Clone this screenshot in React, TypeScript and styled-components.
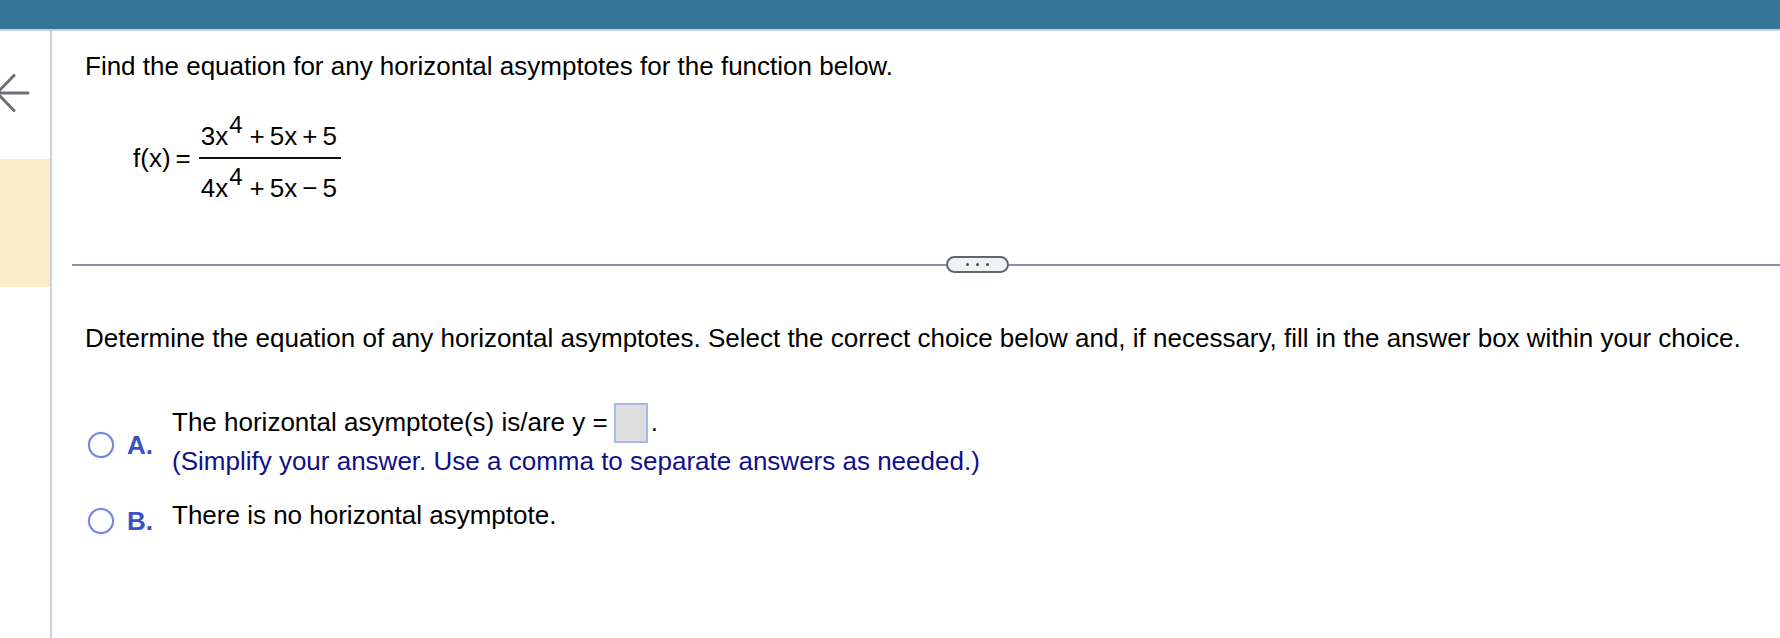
import styled, { createGlobalStyle } from 'styled-components';

const GlobalStyle = createGlobalStyle`
  html, body {
    margin: 0;
    padding: 0;
    background: #ffffff;
  }
  body {
    font-family: "Liberation Sans", Arial, Helvetica, sans-serif;
    color: #000000;
  }
`;

const Page = styled.div`
  display: flex;
  flex-direction: column;
  width: 1780px;
  height: 638px;
  overflow: hidden;
`;

const TopBar = styled.header`
  height: 29px;
  flex-shrink: 0;
  background: #367797;
  border-bottom: 2px solid #c8d1dd;
`;

const Main = styled.div`
  display: flex;
  flex: 1;
  min-height: 0;
`;

const SideRail = styled.aside`
  width: 50px;
  flex-shrink: 0;
  display: flex;
  flex-direction: column;
  border-right: 2px solid #cacfdb;
`;

const BackButton = styled.button`
  display: block;
  width: 30px;
  height: 40px;
  margin-top: 43px;
  padding: 0;
  border: 0;
  background: transparent;
  overflow: hidden;
  cursor: pointer;
`;

const HintPanel = styled.div`
  height: 128px;
  margin-top: 45px;
  background: #f9edc7;
`;

const Content = styled.main`
  flex: 1;
  padding: 20px 0 0 20px;
  font-size: 26px;
`;

const Block = styled.section`
  padding-left: 13px;
`;

const Prompt = styled.p<{ $gap?: number }>`
  margin: ${({ $gap }) => $gap ?? 0}px 0 0;
  line-height: 30px;
  white-space: nowrap;
`;

const Formula = styled.div`
  display: flex;
  align-items: center;
  margin: 40px 0 0 48px;
`;

const FnName = styled.span`
  line-height: 30px;
  margin-bottom: 8px;
  white-space: nowrap;
`;

const Op = styled.span`
  margin: 0 5px;
`;

const Fraction = styled.span`
  display: inline-flex;
  flex-direction: column;
  margin-left: 3px;
`;

const Term = styled.span<{ $pos: 'top' | 'bottom' }>`
  display: block;
  height: 30px;
  line-height: 30px;
  padding: ${({ $pos }) => ($pos === 'top' ? '0 4px 6px 2px' : '14px 4px 0 2px')};
  white-space: nowrap;
`;

const Bar = styled.span`
  display: block;
  height: 2px;
  background: #111111;
`;

const Sup = styled.span`
  position: relative;
  top: -12px;
  font-size: 24px;
  line-height: 1;
  margin: 0 2px 0 1px;
`;

const Divider = styled.div`
  display: flex;
  align-items: center;
  height: 17px;
  margin-top: 53px;
`;

const RuleLine = styled.div<{ $width?: number }>`
  height: 2px;
  background: #878f9a;
  ${({ $width }) => ($width ? `width: ${$width}px;` : 'flex: 1;')}
`;

const MorePill = styled.button`
  display: flex;
  align-items: center;
  justify-content: center;
  gap: 6.5px;
  width: 63px;
  height: 17px;
  box-sizing: border-box;
  padding: 0;
  border: 2px solid #5b6672;
  border-radius: 9px;
  background: #f1f2f4;
  cursor: pointer;
`;

const Dot = styled.span`
  width: 3.5px;
  height: 3.5px;
  border-radius: 50%;
  background: #474d55;
`;

const Choices = styled.div`
  display: flex;
  flex-direction: column;
  gap: 13px;
  margin-top: 52px;
`;

const Choice = styled.label`
  display: flex;
  align-items: center;
  cursor: pointer;
`;

const Radio = styled.span`
  width: 26px;
  height: 26px;
  margin-left: 3px;
  flex-shrink: 0;
  box-sizing: border-box;
  border: 2.5px solid #7387da;
  border-radius: 50%;
  background: #ffffff;
  box-shadow: 0 0 1.5px rgba(80, 90, 140, 0.35);
`;

const Letter = styled.span`
  width: 26px;
  margin: 0 19px 0 13px;
  flex-shrink: 0;
  line-height: 30px;
  font-weight: bold;
  color: #3c52c3;
`;

const ChoiceBody = styled.div<{ $padBottom: number }>`
  padding-bottom: ${({ $padBottom }) => $padBottom}px;
  line-height: 35px;
  white-space: nowrap;
`;

const AnswerLine = styled.div`
  display: flex;
  align-items: center;
  height: 35px;
`;

const AnswerBox = styled.span`
  width: 34px;
  height: 40px;
  margin: 0 3px 0 6px;
  box-sizing: border-box;
  border: 2px solid #a9b8e6;
  background: #dedede;
`;

const Hint = styled.div`
  padding-top: 4px;
  color: #10108a;
`;

const BackArrow = () => (
  <svg width="30" height="40" viewBox="0 0 30 40">
    <path
      d="M-2 19H28M14 1.5L-3 19L14 36.5"
      fill="none"
      stroke="#6d7176"
      strokeWidth="3"
      strokeLinecap="round"
      strokeLinejoin="round"
    />
  </svg>
);

export default function App() {
  return (
    <>
      <GlobalStyle />
      <Page>
        <TopBar />
        <Main>
          <SideRail>
            <BackButton aria-label="Back">
              <BackArrow />
            </BackButton>
            <HintPanel />
          </SideRail>
          <Content>
            <Block>
              <Prompt>Find the equation for any horizontal asymptotes for the function below.</Prompt>
              <Formula>
                <FnName>
                  f(x)<Op>=</Op>
                </FnName>
                <Fraction>
                  <Term $pos="top">
                    3x<Sup>4</Sup>
                    <Op>+</Op>5x<Op>+</Op>5
                  </Term>
                  <Bar />
                  <Term $pos="bottom">
                    4x<Sup>4</Sup>
                    <Op>+</Op>5x<Op>−</Op>5
                  </Term>
                </Fraction>
              </Formula>
            </Block>

            <Divider>
              <RuleLine $width={874} />
              <MorePill aria-label="Show more">
                <Dot />
                <Dot />
                <Dot />
              </MorePill>
              <RuleLine />
            </Divider>

            <Block>
              <Prompt $gap={50}>
                Determine the equation of any horizontal asymptotes. Select the correct choice below and, if
                necessary, fill in the answer box within your choice.
              </Prompt>
              <Choices>
                <Choice>
                  <Radio />
                  <Letter>A.</Letter>
                  <ChoiceBody $padBottom={6}>
                    <AnswerLine>
                      The horizontal asymptote(s) is/are y =<AnswerBox />.
                    </AnswerLine>
                    <Hint>(Simplify your answer. Use a comma to separate answers as needed.)</Hint>
                  </ChoiceBody>
                </Choice>
                <Choice>
                  <Radio />
                  <Letter>B.</Letter>
                  <ChoiceBody $padBottom={10}>There is no horizontal asymptote.</ChoiceBody>
                </Choice>
              </Choices>
            </Block>
          </Content>
        </Main>
      </Page>
    </>
  );
}
